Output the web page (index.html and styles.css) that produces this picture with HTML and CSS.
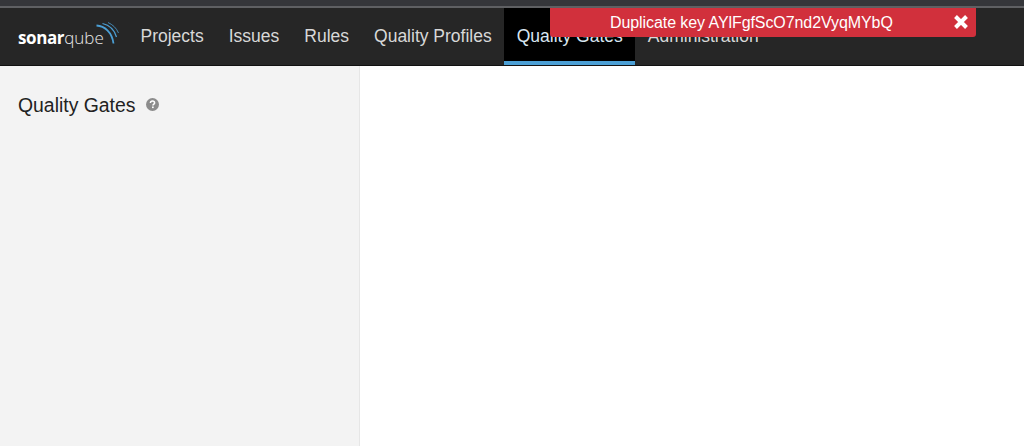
FILE: index.html
```html
<!DOCTYPE html>
<html lang="en">
<head>
    <meta charset="UTF-8">
    <title>Quality Gates</title>
    <link rel="stylesheet" href="styles.css">
</head>
<body>
    <div class="browser-strip"></div>
    <nav class="navbar">
        <a class="logo" href="#">
            <span class="logo-sonar">sonar</span><span class="logo-qube">qube</span>
            <svg class="logo-waves" width="24" height="24" viewBox="0 0 24 24">
                <path d="M0.500 3.500C8.500 4 16 10 17.500 21.500" fill="none" stroke="#4b9fd5" stroke-width="1.800"/>
                <path d="M6.500 1.500C13 3 18.500 8 20.500 15" fill="none" stroke="#4b9fd5" stroke-width="1.200"/>
                <path d="M12 0.500C16.500 2.500 20.500 6 22.500 11" fill="none" stroke="#4b9fd5" stroke-width="0.800"/>
            </svg>
        </a>
        <ul class="nav-menu">
            <li><a href="#">Projects</a></li>
            <li><a href="#">Issues</a></li>
            <li><a href="#">Rules</a></li>
            <li><a href="#">Quality Profiles</a></li>
            <li class="active"><a href="#">Quality Gates</a></li>
            <li><a href="#">Administration</a></li>
        </ul>
    </nav>
    <div class="alert">
        <span class="alert-text">Duplicate key AYlFgfScO7nd2VyqMYbQ</span>
        <svg class="alert-close" width="16" height="16" viewBox="0 0 16 16">
            <path d="M2.500 2.500L13.500 13.500M13.500 2.500L2.500 13.500" fill="none" stroke="#fff" stroke-width="4"/>
        </svg>
    </div>
    <main class="page">
        <aside class="sidebar">
            <h1>Quality Gates</h1>
            <svg class="help" width="13" height="13" viewBox="0 0 13 13">
                <circle cx="6.500" cy="6.500" r="6.500" fill="#8c8c8c"/>
                <path d="M4.400 5C4.500 3.700 5.400 3.100 6.500 3.100C7.700 3.100 8.600 3.800 8.600 4.900C8.600 6.200 6.900 6.200 6.900 7.600" fill="none" stroke="#fff" stroke-width="1.500"/>
                <rect x="6" y="8.500" width="1.700" height="1.600" fill="#fff"/>
            </svg>
        </aside>
        <section class="content"></section>
    </main>
</body>
</html>
```

FILE: styles.css
```css
html, body {
    height: 100%;
}
body {
    margin: 0;
    font-family: 'Liberation Sans', Arial, sans-serif;
    display: flex;
    flex-direction: column;
    position: relative;
    overflow: hidden;
    background: #fff;
}
.browser-strip {
    height: 6px;
    background: #35363a;
    border-bottom: 2px solid #5f6063;
}
.navbar {
    height: 58px;
    background: #262626;
    display: flex;
    align-items: stretch;
    box-sizing: border-box;
    border-bottom: 1px solid #111;
}
.logo {
    width: 110px;
    margin-left: 18px;
    flex-shrink: 0;
    display: flex;
    align-items: center;
    position: relative;
    text-decoration: none;
    padding-top: 2px;
    box-sizing: border-box;
}
.logo-sonar {
    color: #fff;
    font-family: 'Open Sans', sans-serif;
    font-weight: 700;
    font-size: 17px;
    letter-spacing: -0.4px;
}
.logo-qube {
    color: #e8e8e8;
    font-family: 'Open Sans', sans-serif;
    font-weight: 300;
    font-size: 17px;
}
.logo-waves {
    position: absolute;
    left: 78px;
    top: 14px;
}
.nav-menu {
    list-style: none;
    margin: 0;
    padding: 0;
    display: flex;
}
.nav-menu li {
    display: flex;
}
.nav-menu a {
    display: flex;
    align-items: center;
    padding: 3px 12.500px 0;
    color: #d8d8d8;
    font-size: 17.500px;
    text-decoration: none;
    box-sizing: border-box;
    border-bottom: 4px solid transparent;
}
.nav-menu .active a {
    background: #000;
    color: #d8e6f0;
    border-bottom-color: #4b9fd5;
}
.alert {
    position: absolute;
    left: 550px;
    top: 8px;
    width: 426px;
    height: 29px;
    box-sizing: border-box;
    background: #d1303c;
    border-radius: 0 0 3px 3px;
    color: #fff;
    font-size: 16px;
    display: flex;
    align-items: center;
}
.alert-text {
    margin-left: 60px;
    letter-spacing: -0.08px;
}
.alert-close {
    position: absolute;
    right: 7px;
    top: 6px;
}
.page {
    flex: 1;
    display: flex;
}
.sidebar {
    width: 360px;
    background: #f3f3f3;
    border-right: 1px solid #e6e6e6;
    padding: 27px 0 0 18px;
    display: flex;
    align-items: flex-start;
    box-sizing: border-box;
}
.sidebar h1 {
    margin: 0;
    font-size: 19.400px;
    font-weight: 400;
    line-height: 24px;
    color: #222;
}
.help {
    margin: 5px 0 0 11px;
}
.content {
    flex: 1;
    background: #fff;
}
```
